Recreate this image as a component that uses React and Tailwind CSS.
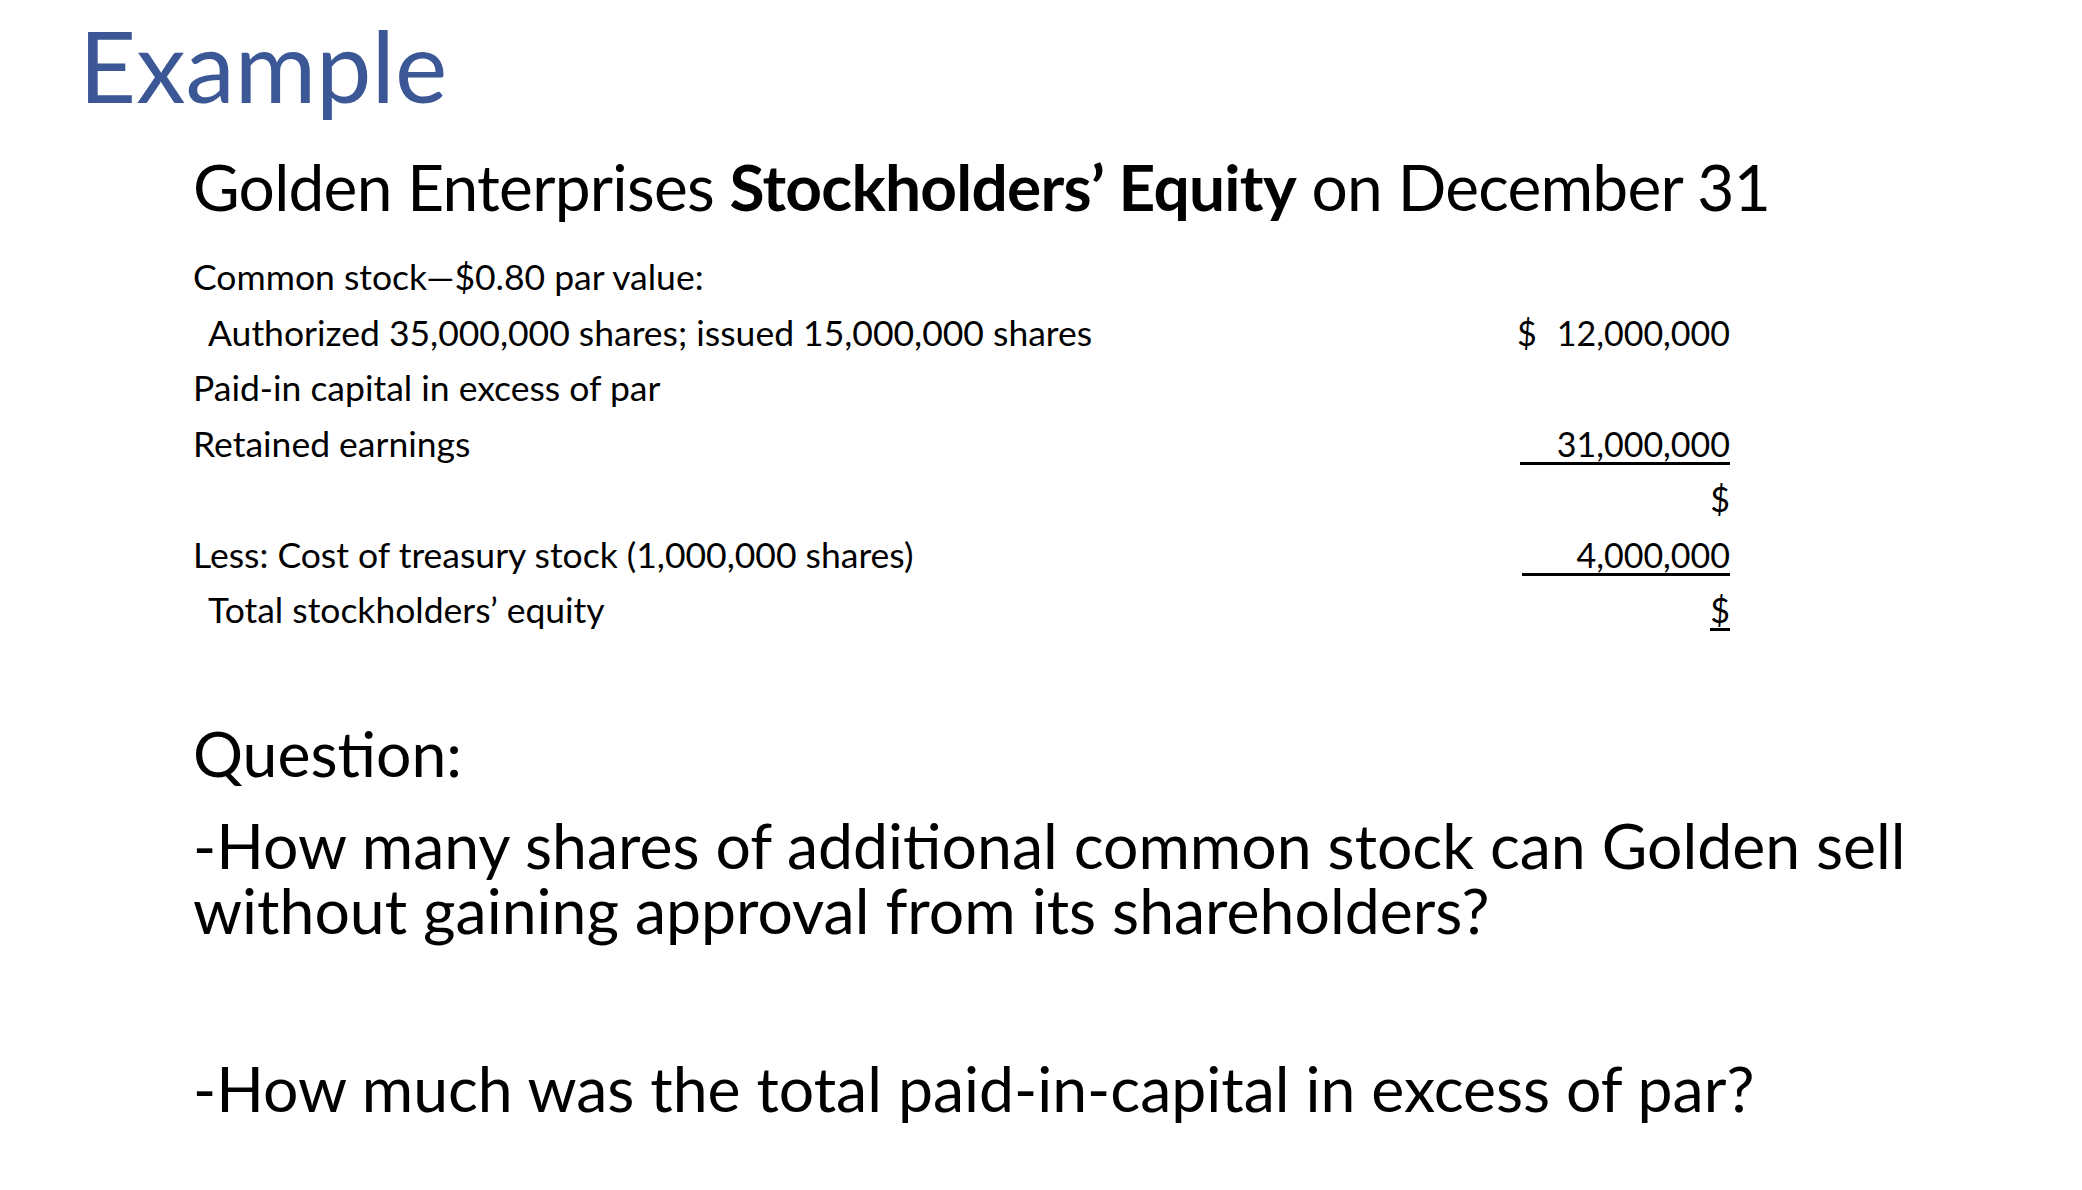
// Slide: Golden Enterprises stockholders' equity example
function Row({ label, indent, children }) {
  return (
    <div className="flex h-[55.5px] items-baseline justify-between leading-[55.5px]">
      <span className={indent ? "pl-[15px]" : ""}>{label}</span>
      {children}
    </div>
  );
}

function Underlined({ className = "", children }) {
  return (
    <span className={`inline-block border-b-[3px] border-black text-right leading-[36px] ${className}`}>
      {children}
    </span>
  );
}

export default function App() {
  return (
    <div className="h-[1190px] w-[2082px] overflow-hidden bg-white font-['Lato',sans-serif] text-black">
      <h1 className="pl-[79px] pt-[17px] text-[99px] leading-[96px] text-[#3b5795]">Example</h1>

      <div className="pl-[193px] pr-[352px]">
        <h2 className="mt-[34px] whitespace-nowrap text-[64px] leading-[80px] tracking-[-0.75px]">
          Golden Enterprises <span className="font-bold">Stockholders’ Equity</span> on December 31
        </h2>

        <div className="mt-[22px] text-[35.5px]">
          <Row label="Common stock—$0.80 par value:" />
          <Row indent label="Authorized 35,000,000 shares; issued 15,000,000 shares">
            <span className="flex w-[213px] justify-between text-[34px]">
              <span>$</span>
              <span>12,000,000</span>
            </span>
          </Row>
          <Row label="Paid-in capital in excess of par" />
          <Row label="Retained earnings">
            <Underlined className="w-[210px] text-[34px]">31,000,000</Underlined>
          </Row>
          <Row label="">
            <span className="text-[34px]">$</span>
          </Row>
          <Row label="Less: Cost of treasury stock (1,000,000 shares)">
            <Underlined className="w-[208px] text-[34px]">4,000,000</Underlined>
          </Row>
          <Row indent label="Total stockholders’ equity">
            <Underlined className="text-[34px]">$</Underlined>
          </Row>
        </div>
      </div>

      <div className="whitespace-nowrap pl-[193px] text-[62.5px]">
        <p className="mt-[75px] leading-[80px]">Question:</p>
        <p className="mt-[19px] leading-[65px]">
          -How many shares of additional common stock can Golden sell
          <br />
          without gaining approval from its shareholders?
        </p>
        <p className="mt-[113px] leading-[65px]">-How much was the total paid-in-capital in excess of par?</p>
      </div>
    </div>
  );
}
